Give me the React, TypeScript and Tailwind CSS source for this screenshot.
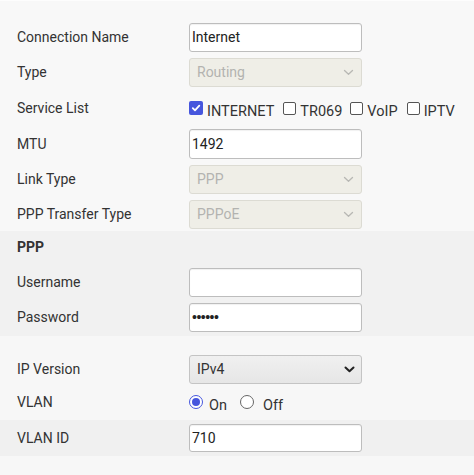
import React from "react";

const font = { fontFamily: 'Roboto, "Liberation Sans", Arial, sans-serif' };

function Label({ children }: { children: React.ReactNode }) {
  return <div className="w-[189px] shrink-0 pl-[17px] text-[14px] text-[#333]">{children}</div>;
}

function TextInput({ value, h = "h-[29px]", password }: { value: string; h?: string; password?: boolean }) {
  return (
    <div className={`w-[173px] ${h} flex items-center rounded-[3px] border border-[#bdbdbd] bg-white pl-[2px] text-[14px] text-[#222] shadow-[inset_0_1px_1px_rgba(0,0,0,0.06)]`}>
      {password ? (
        <span className="text-[14px] tracking-[-0.5px] text-[#222]" style={{ fontFamily: '"Liberation Sans", Arial, sans-serif' }}>
          ••••••
        </span>
      ) : (
        value
      )}
    </div>
  );
}

function Chevron({ color, width }: { color: string; width: number }) {
  return (
    <svg width="11" height="7" viewBox="0 0 11 7" fill="none">
      <path d="M1.5 1.5 L5.5 5.3 L9.5 1.5" stroke={color} strokeWidth={width} strokeLinecap="round" strokeLinejoin="round" />
    </svg>
  );
}

function DisabledSelect({ value }: { value: string }) {
  return (
    <div className="w-[173px] h-[29px] flex items-center justify-between rounded-[3px] border border-[#dcdbd3] bg-[#efeee7] pl-[7px] pr-[7px] text-[14px] text-[#b3b3b0]">
      <span>{value}</span>
      <Chevron color="#b8b8b4" width={1.3} />
    </div>
  );
}

function Check({ checked }: { checked?: boolean }) {
  if (checked)
    return (
      <span className="w-[14px] h-[14px] rounded-[2px] bg-[#4656dd] flex items-center justify-center shrink-0">
        <svg width="10" height="10" viewBox="0 0 10 10" fill="none">
          <path d="M1.8 5.2 L4 7.4 L8.3 2.6" stroke="white" strokeWidth="1.8" strokeLinecap="round" strokeLinejoin="round" />
        </svg>
      </span>
    );
  return <span className="w-[13px] h-[13px] rounded-[2px] border border-[#555] bg-white shrink-0" />;
}

function Row({ label, children, className = "" }: { label?: React.ReactNode; children: React.ReactNode; className?: string }) {
  return (
    <div className={`flex items-center ${className}`}>
      <Label>{label}</Label>
      {children}
    </div>
  );
}

export default function App() {
  return (
    <div className="w-[474px] h-[475px] overflow-hidden bg-[#f7f7f7]" style={font}>
      {/* Section 1 */}
      <div className="flex flex-col gap-[6px] pt-[22px] pb-[2px] bg-[#f8f8f8] border-t border-[#fdfdfd]">
        <Row label="Connection Name">
          <TextInput value="Internet" />
        </Row>
        <Row label="Type">
          <DisabledSelect value="Routing" />
        </Row>
        <Row label="Service List" className="h-[30px]">
          <div className="flex items-center text-[14.5px] text-[#333]">
            <Check checked />
            <span className="pt-[7px] ml-[4px] mr-[9px]">INTERNET</span>
            <Check />
            <span className="pt-[7px] ml-[4px] mr-[8px]">TR069</span>
            <Check />
            <span className="pt-[7px] ml-[4px] mr-[9px]">VoIP</span>
            <Check />
            <span className="pt-[7px] ml-[4px]">IPTV</span>
          </div>
        </Row>
        <Row label="MTU">
          <TextInput value="1492" h="h-[30px]" />
        </Row>
        <Row label="Link Type">
          <DisabledSelect value="PPP" />
        </Row>
        <Row label="PPP Transfer Type">
          <DisabledSelect value="PPPoE" />
        </Row>
      </div>

      {/* Section 2: PPP */}
      <div className="flex flex-col gap-[6px] pt-[2px] pb-[4px] bg-[#f1f1f1]">
        <div className="h-[29px] flex items-center pl-[17px] text-[14px] font-bold text-[#333]">PPP</div>
        <Row label="Username">
          <TextInput value="" />
        </Row>
        <Row label="Password">
          <TextInput value="" password />
        </Row>
      </div>

      {/* Section 3 */}
      <div className="flex flex-col pt-[19px] bg-[#f7f7f7]">
        <Row label="IP Version">
          <div className="w-[173px] h-[29px] flex items-center justify-between rounded-[3px] border border-[#c4c4c4] bg-gradient-to-b from-[#f0f0f0] to-[#e6e6e6] pl-[7px] pr-[6px] text-[14px] text-[#333]">
            <span>IPv4</span>
            <Chevron color="#222" width={2} />
          </div>
        </Row>
        <Row label="VLAN" className="h-[30px] mt-[3px]">
          <div className="flex items-center text-[14.5px] text-[#333]">
            <span className="w-[14px] h-[14px] rounded-full border-[1.5px] border-[#4656dd] bg-white flex items-center justify-center">
              <span className="w-[8px] h-[8px] rounded-full bg-[#4656dd]" />
            </span>
            <span className="pt-[7px] ml-[6px] mr-[13px]">On</span>
            <span className="w-[14px] h-[14px] rounded-full border border-[#666] bg-white" />
            <span className="pt-[7px] ml-[9px]">Off</span>
          </div>
        </Row>
        <div className="mt-[3px] py-[4px] bg-[#f0f0f0]">
          <Row label="VLAN ID">
            <TextInput value="710" h="h-[28px]" />
          </Row>
        </div>
      </div>
    </div>
  );
}
